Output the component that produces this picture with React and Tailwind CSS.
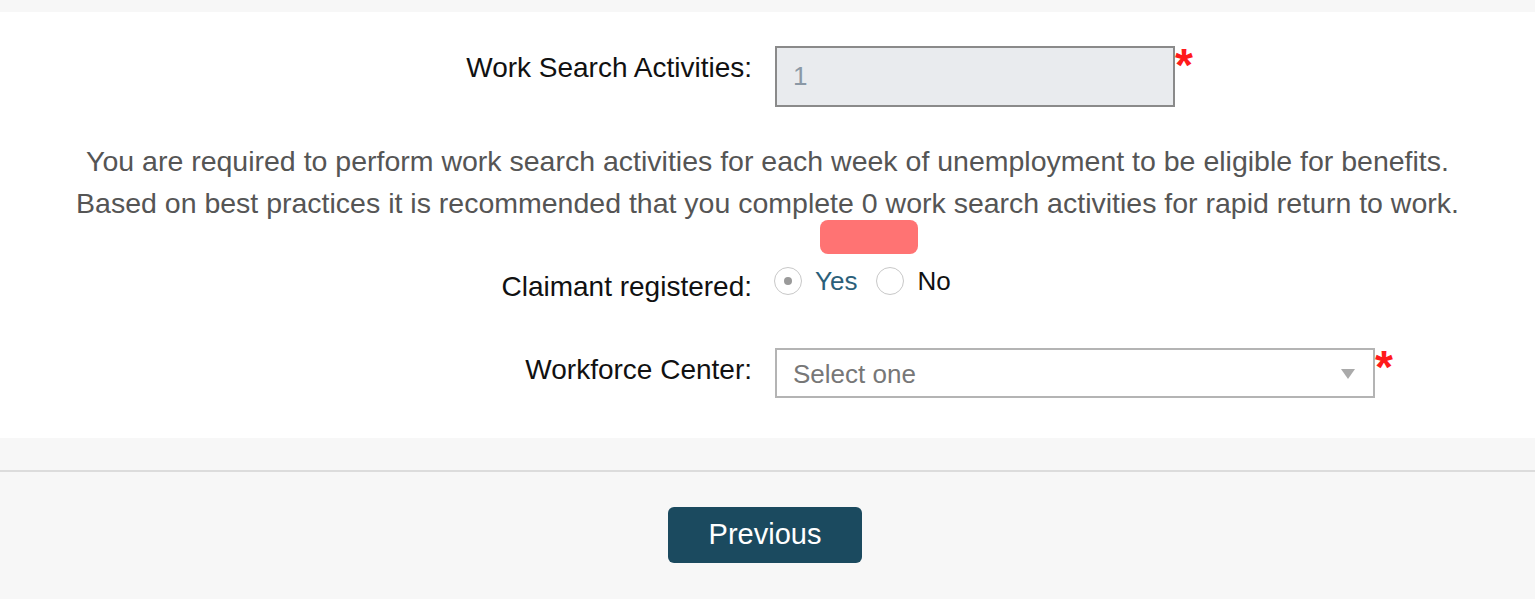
import React from 'react';

function Asterisk() {
  return (
    <span className="text-[#ff1a1a] text-[46px] leading-none font-bold -mt-[4px] select-none">*</span>
  );
}

function Radio({ checked, label, labelClass }) {
  return (
    <label className="flex items-center">
      <span className="w-[28px] h-[28px] rounded-full border border-[#c8c8c8] bg-white flex items-center justify-center">
        {checked && <span className="w-[8px] h-[8px] rounded-full bg-[#9a9a9a]" />}
      </span>
      <span className={`ml-[13px] text-[26px] leading-none ${labelClass}`}>{label}</span>
    </label>
  );
}

export default function App() {
  return (
    <div className="min-h-[599px] bg-[#f7f7f7] pt-[12px] font-['Liberation_Sans',Arial,sans-serif]">
      <div className="bg-white pt-[34px] pb-[40px]">
        {/* Work search activities */}
        <div className="flex items-start">
          <div className="w-[752px] text-right text-[28px] text-[#111] pt-[1px]">Work Search Activities:</div>
          <div className="ml-[23px] flex items-start">
            <div className="w-[400px] h-[61px] border-2 border-[#8a8a8a] bg-[#e9ebee] flex items-center px-[16px] text-[26px] text-[#8b98a5]">
              1
            </div>
            <Asterisk />
          </div>
        </div>

        {/* Info paragraph */}
        <div className="relative mt-[33px] text-center text-[28.5px] leading-[42px] text-[#555]">
          <p>You are required to perform work search activities for each week of unemployment to be eligible for benefits.</p>
          <p>Based on best practices it is recommended that you complete 0 work search activities for rapid return to work.</p>
          <span className="absolute left-[820px] top-[80px] w-[98px] h-[34px] rounded-[8px] bg-[#ff6b6b] opacity-95" />
        </div>

        {/* Claimant registered */}
        <div className="flex items-center mt-[30px]">
          <div className="w-[752px] text-right text-[28px] text-[#111] pt-[12px]">Claimant registered:</div>
          <div className="ml-[22px] flex items-center gap-[19px]">
            <Radio checked label="Yes" labelClass="text-[#2b5f7a]" />
            <Radio label="No" labelClass="text-[#111]" />
          </div>
        </div>

        {/* Workforce center */}
        <div className="flex items-start mt-[40px]">
          <div className="w-[752px] text-right text-[28px] text-[#111] pt-[1px]">Workforce Center:</div>
          <div className="ml-[23px] flex items-start">
            <div className="w-[600px] h-[50px] border-2 border-[#b4b4b4] bg-white flex items-center justify-between px-[16px] text-[26px] text-[#777]">
              <span className="pt-[2px]">Select one</span>
              <svg width="14" height="10" viewBox="0 0 14 10" className="mr-[2px] mt-[2px]">
                <path d="M0 0 L14 0 L7 10 Z" fill="#aaaaaa" />
              </svg>
            </div>
            <Asterisk />
          </div>
        </div>
      </div>

      <div className="mt-[32px] border-t-2 border-[#dcdcdc] pt-[35px] flex justify-center">
        <button className="mr-[5px] w-[194px] h-[56px] rounded-[6px] bg-[#1b4a5f] text-white text-[29px]">
          Previous
        </button>
      </div>
    </div>
  );
}
